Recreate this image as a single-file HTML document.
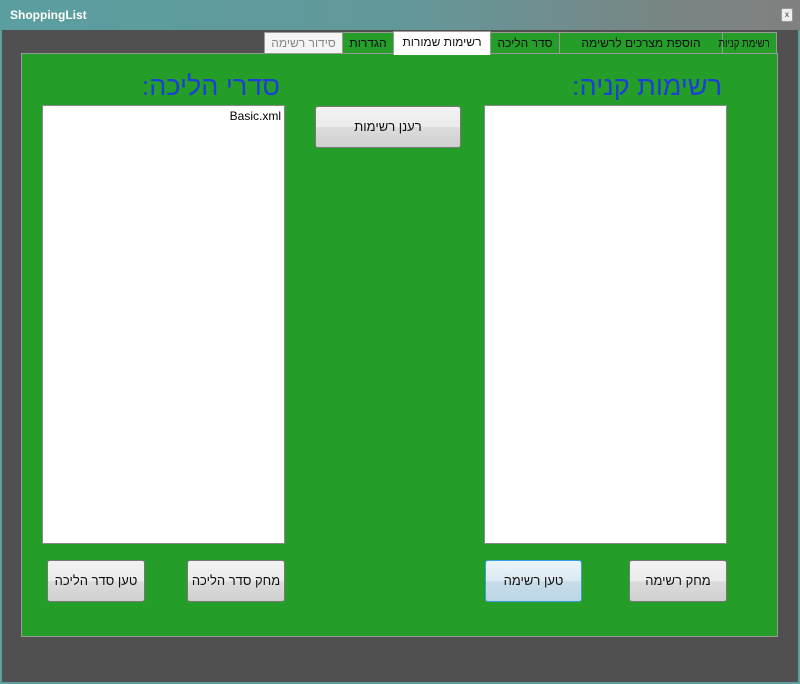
<!DOCTYPE html>
<html><head><meta charset="utf-8"><style>
*{margin:0;padding:0;box-sizing:border-box}
body{width:800px;height:684px;background:#5f9ea0;font-family:"Liberation Sans","DejaVu Sans",sans-serif;position:relative;overflow:hidden}
.title{position:absolute;left:0;top:0;width:800px;height:30px;background:linear-gradient(90deg,#5b9ea0 0%,#63989a 50%,#7a8584 85%,#808080 100%);}
.title span{position:absolute;left:10px;top:8px;color:#fff;font-weight:bold;font-size:12px}
.x{position:absolute;left:781px;top:8px;width:12px;height:14px;background:#eee;border:1px solid #999;border-radius:2px;font-size:8px;text-align:center;line-height:12px;color:#333}
.main{position:absolute;left:2px;top:30px;width:796px;height:652px;background:#505050}
.tab{position:absolute;top:32px;height:22px;background:#249e28;border:1px solid #999;font-size:12px;text-align:center;line-height:20px;color:#111;direction:rtl;white-space:nowrap;overflow:visible}
.panel{position:absolute;left:21px;top:53px;width:757px;height:584px;background:#249e28;border:1px solid #999}
.list{position:absolute;top:105px;width:243px;height:439px;background:#fff;border:1px solid #888}
h1{position:absolute;top:71px;font-weight:normal;font-size:27px;color:#1c3fd6;direction:rtl;white-space:nowrap}
.btn{position:absolute;height:42px;border:1px solid #777;border-radius:3px;background:linear-gradient(#f2f2f2 0%,#ebebeb 50%,#dcdcdc 51%,#d0d0d0 100%);font-size:13px;text-align:center;line-height:40px;color:#111;direction:rtl}
.blue{border-color:#3c9ee0;background:linear-gradient(#eaf4fb 0%,#dde9f2 50%,#c8dde9 51%,#bcd6e6 100%)}
</style></head><body>
<div class="title"><span>ShoppingList</span><div class="x">x</div></div>
<div class="main"></div>
<div class="tab" style="left:264px;width:79px;background:#f4f4f4;color:#888">סידור רשימה</div>
<div class="tab" style="left:342px;width:52px">הגדרות</div>
<div class="tab" style="left:393px;width:98px;top:31px;height:24px;background:#fff;z-index:2;border-bottom:none">רשימות שמורות</div>
<div class="tab" style="left:490px;width:70px">סדר הליכה</div>
<div class="tab" style="left:559px;width:164px">הוספת מצרכים לרשימה</div>
<div class="tab" style="left:722px;width:55px"><span style="display:inline-block;transform:scaleX(0.8);transform-origin:center">רשימת קניות</span></div>
<div class="panel"></div>
<h1 style="right:520px">סדרי הליכה:</h1>
<h1 style="right:78px">רשימות קניה:</h1>
<div class="list" style="left:42px"><div style="position:absolute;right:3px;top:3px;font-size:12px">Basic.xml</div></div>
<div class="list" style="left:484px"></div>
<div class="btn" style="left:315px;top:106px;width:146px">רענן רשימות</div>
<div class="btn" style="left:47px;top:560px;width:98px">טען סדר הליכה</div>
<div class="btn" style="left:187px;top:560px;width:98px">מחק סדר הליכה</div>
<div class="btn blue" style="left:485px;top:560px;width:97px">טען רשימה</div>
<div class="btn" style="left:629px;top:560px;width:98px">מחק רשימה</div>
</body></html>
